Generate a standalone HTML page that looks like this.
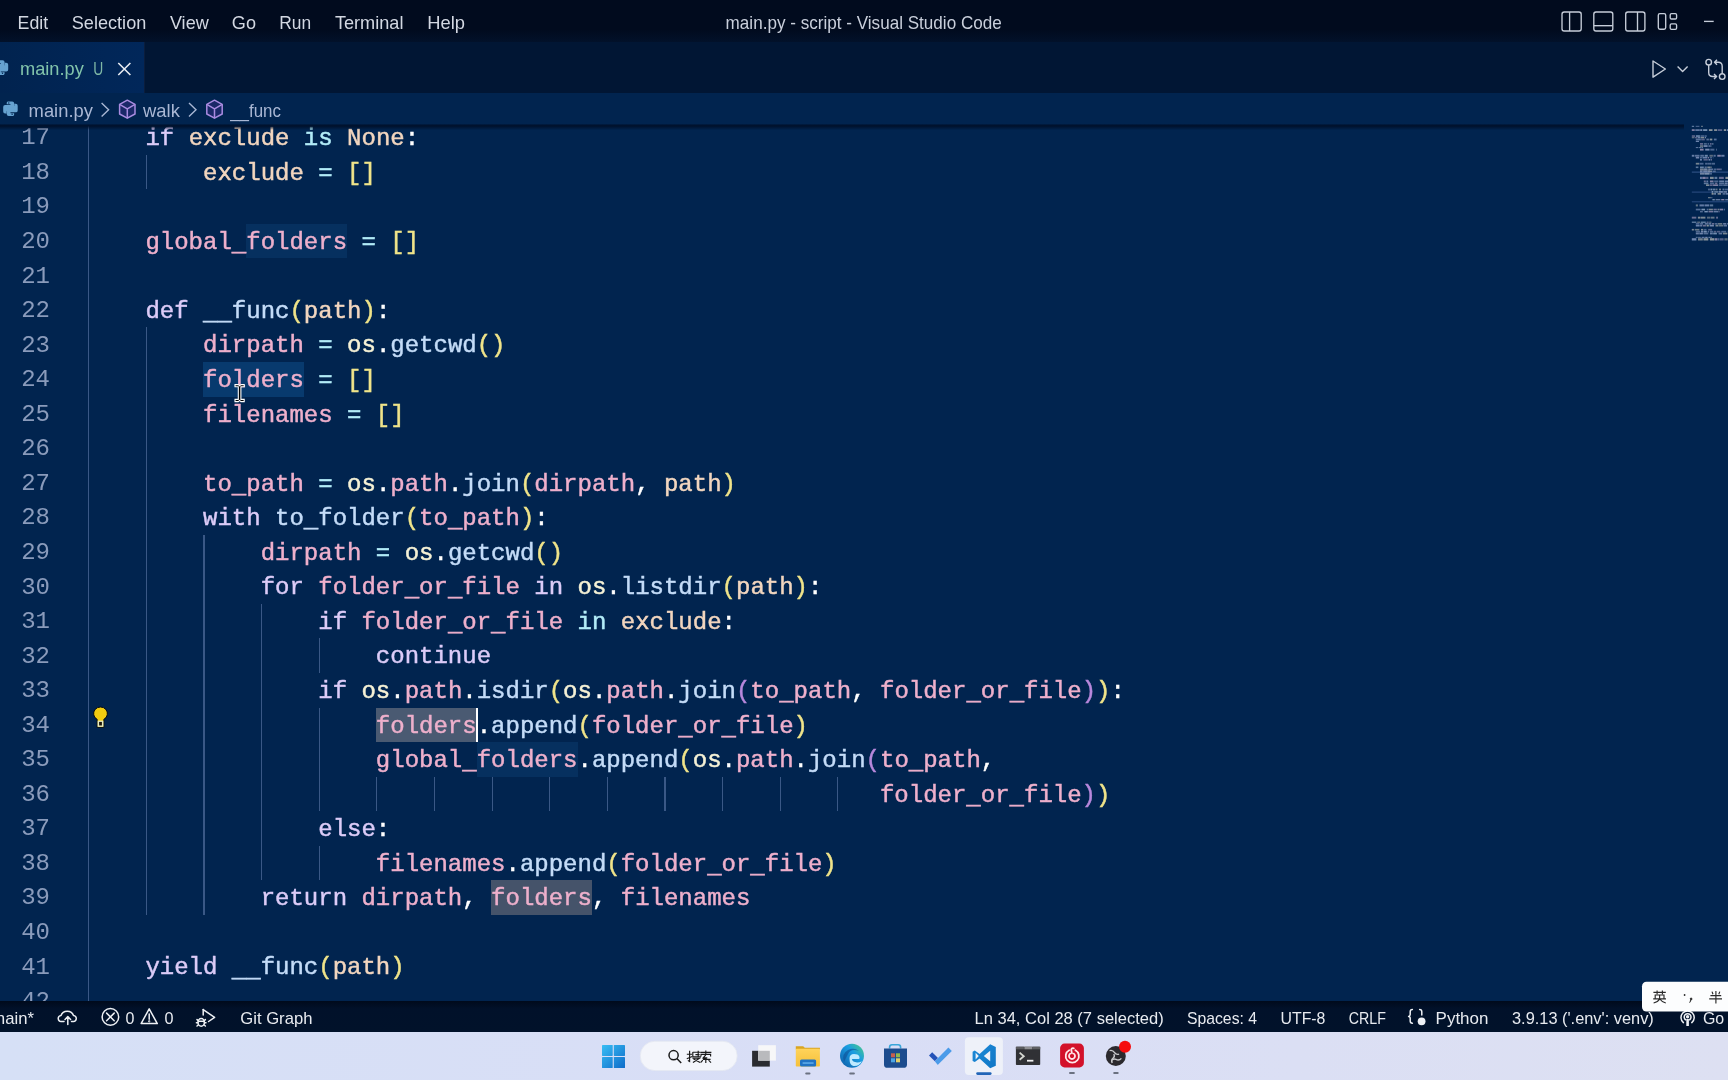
<!DOCTYPE html>
<html><head><meta charset="utf-8">
<style>
*{margin:0;padding:0;box-sizing:border-box}
html,body{width:1728px;height:1080px;overflow:hidden;background:#01244f}
body{position:relative;font-family:"Liberation Sans",sans-serif}
.abs{position:absolute}
#title{position:absolute;left:0;top:0;width:1728px;height:42px;background:linear-gradient(#010b1e 70%,#02112a)}
.mi{position:absolute;top:11px;font-size:18px;color:#d9dde6;white-space:nowrap}
#tabs{position:absolute;left:0;top:42px;width:1728px;height:51px;background:#011634}
#tab{position:absolute;left:0;top:0;width:145px;height:51px;background:linear-gradient(90deg,#01234f,#01275a);border-right:1px solid #0b1d3c}
#bc{position:absolute;left:0;top:93px;width:1728px;height:32px;background:#01244f}
.bct{position:absolute;top:4px;font-size:18px;color:#a9b8d6;white-space:nowrap}
#editor{position:absolute;left:0;top:125px;width:1728px;height:876px;background:#01244f;overflow:hidden}
#shadow{position:absolute;left:0;top:124px;width:1684px;height:6px;background:linear-gradient(rgba(0,16,42,0.3),#00102a 30%,rgba(0,20,50,0))}
.ln{position:absolute;left:0;width:50px;text-align:right;font-family:"Liberation Mono",monospace;font-size:24px;line-height:34.55px;height:34.55px;color:#8a9bbb;white-space:pre}
.cl{position:absolute;left:87.8px;font-family:"Liberation Mono",monospace;font-size:24px;line-height:34.55px;height:34.55px;color:#fff;white-space:pre}
.ig{position:absolute;width:1.2px;background:#3a5886}
.wh{position:absolute;height:34.55px;background:#083a6e}
.wh2{position:absolute;height:34.55px;background:#06305f}
.sel{position:absolute;height:34.55px;background:#4a5a72}
.sel2{position:absolute;height:34.55px;background:#45536a}
.cl i{font-style:normal;position:relative;top:2.2px}
.cl{-webkit-text-stroke:0.45px currentColor}
.cur{position:absolute;width:2px;height:34.55px;background:#fff}
#status{position:absolute;left:0;top:1001px;width:1728px;height:31px;background:linear-gradient(#000a1c,#01112a 25%,#01122a)}
.st{position:absolute;top:5px;font-size:17.5px;color:#e6e9ef;white-space:nowrap}
#taskbar{position:absolute;left:0;top:1032px;width:1728px;height:48px;background:linear-gradient(90deg,#d6e0f6,#d9def6 50%,#dde0f2)}
</style></head><body>
<div id="title"></div>
<div id="tabs">
  <div id="tab"></div>
</div>
<div id="bc"></div>
<div id="editor"></div>
<div style="position:absolute;left:0;top:0;width:1728px;height:1001px;overflow:hidden;will-change:transform"><div class="ln" style="top:121.35px">17</div>
<div class="ln" style="top:155.90px">18</div>
<div class="ln" style="top:190.45px">19</div>
<div class="ln" style="top:225.00px">20</div>
<div class="ln" style="top:259.55px">21</div>
<div class="ln" style="top:294.10px">22</div>
<div class="ln" style="top:328.65px">23</div>
<div class="ln" style="top:363.20px">24</div>
<div class="ln" style="top:397.75px">25</div>
<div class="ln" style="top:432.30px">26</div>
<div class="ln" style="top:466.85px">27</div>
<div class="ln" style="top:501.40px">28</div>
<div class="ln" style="top:535.95px">29</div>
<div class="ln" style="top:570.50px">30</div>
<div class="ln" style="top:605.05px">31</div>
<div class="ln" style="top:639.60px">32</div>
<div class="ln" style="top:674.15px">33</div>
<div class="ln" style="top:708.70px">34</div>
<div class="ln" style="top:743.25px">35</div>
<div class="ln" style="top:777.80px">36</div>
<div class="ln" style="top:812.35px">37</div>
<div class="ln" style="top:846.90px">38</div>
<div class="ln" style="top:881.45px">39</div>
<div class="ln" style="top:916.00px">40</div>
<div class="ln" style="top:950.55px">41</div>
<div class="ln" style="top:985.10px">42</div>
<div class="wh2" style="left:246.28px;top:223.80px;width:100.85px"></div>
<div class="wh" style="left:203.06px;top:362.00px;width:100.85px"></div>
<div class="wh2" style="left:476.79px;top:742.05px;width:100.85px"></div>
<div class="sel" style="left:375.94px;top:707.50px;width:100.85px"></div>
<div class="sel2" style="left:491.20px;top:880.25px;width:100.85px"></div>
<div class="ig" style="left:88.15px;top:126.00px;height:899.36px"></div>
<div class="ig" style="left:145.78px;top:154.70px;height:34.55px"></div>
<div class="ig" style="left:145.78px;top:327.45px;height:587.35px"></div>
<div class="ig" style="left:203.41px;top:534.75px;height:380.05px"></div>
<div class="ig" style="left:261.03px;top:603.85px;height:276.40px"></div>
<div class="ig" style="left:318.66px;top:638.40px;height:34.55px"></div>
<div class="ig" style="left:318.66px;top:707.50px;height:103.65px"></div>
<div class="ig" style="left:318.66px;top:845.70px;height:34.55px"></div>
<div class="ig" style="left:376.29px;top:776.60px;height:34.55px"></div>
<div class="ig" style="left:433.92px;top:776.60px;height:34.55px"></div>
<div class="ig" style="left:491.55px;top:776.60px;height:34.55px"></div>
<div class="ig" style="left:549.17px;top:776.60px;height:34.55px"></div>
<div class="ig" style="left:606.80px;top:776.60px;height:34.55px"></div>
<div class="ig" style="left:664.43px;top:776.60px;height:34.55px"></div>
<div class="ig" style="left:722.06px;top:776.60px;height:34.55px"></div>
<div class="ig" style="left:779.69px;top:776.60px;height:34.55px"></div>
<div class="ig" style="left:837.31px;top:776.60px;height:34.55px"></div>
<div class="cl" style="top:122.15px">    <span style="color:#dcccf8">if</span> <span style="color:#f2d6bf">exclude</span> <span style="color:#b2ecf8">is</span> <span style="color:#f2d6bf">None</span><span style="color:#ffffff">:</span></div>
<div class="cl" style="top:156.70px">        <span style="color:#f2d6bf">exclude</span> <span style="color:#b2ecf8">=</span> <span style="color:#f0e48a">[]</span></div>
<div class="cl" style="top:191.25px"></div>
<div class="cl" style="top:225.80px">    <span style="color:#eeb0cc">global<i>_</i>folders</span> <span style="color:#b2ecf8">=</span> <span style="color:#f0e48a">[]</span></div>
<div class="cl" style="top:260.35px"></div>
<div class="cl" style="top:294.90px">    <span style="color:#dcccf8">def</span> <span style="color:#c4dcf8"><i>_</i><i>_</i>func</span><span style="color:#f0e48a">(</span><span style="color:#f2d6bf">path</span><span style="color:#f0e48a">)</span><span style="color:#ffffff">:</span></div>
<div class="cl" style="top:329.45px">        <span style="color:#eeb0cc">dirpath</span> <span style="color:#b2ecf8">=</span> <span style="color:#f6f2d6">os</span><span style="color:#ffffff">.</span><span style="color:#c4dcf8">getcwd</span><span style="color:#f0e48a">()</span></div>
<div class="cl" style="top:364.00px">        <span style="color:#eeb0cc">folders</span> <span style="color:#b2ecf8">=</span> <span style="color:#f0e48a">[]</span></div>
<div class="cl" style="top:398.55px">        <span style="color:#eeb0cc">filenames</span> <span style="color:#b2ecf8">=</span> <span style="color:#f0e48a">[]</span></div>
<div class="cl" style="top:433.10px"></div>
<div class="cl" style="top:467.65px">        <span style="color:#eeb0cc">to<i>_</i>path</span> <span style="color:#b2ecf8">=</span> <span style="color:#f6f2d6">os</span><span style="color:#ffffff">.</span><span style="color:#eeb0cc">path</span><span style="color:#ffffff">.</span><span style="color:#c4dcf8">join</span><span style="color:#f0e48a">(</span><span style="color:#eeb0cc">dirpath</span><span style="color:#ffffff">, </span><span style="color:#f2d6bf">path</span><span style="color:#f0e48a">)</span></div>
<div class="cl" style="top:502.20px">        <span style="color:#dcccf8">with</span> <span style="color:#c4dcf8">to<i>_</i>folder</span><span style="color:#f0e48a">(</span><span style="color:#eeb0cc">to<i>_</i>path</span><span style="color:#f0e48a">)</span><span style="color:#ffffff">:</span></div>
<div class="cl" style="top:536.75px">            <span style="color:#eeb0cc">dirpath</span> <span style="color:#b2ecf8">=</span> <span style="color:#f6f2d6">os</span><span style="color:#ffffff">.</span><span style="color:#c4dcf8">getcwd</span><span style="color:#f0e48a">()</span></div>
<div class="cl" style="top:571.30px">            <span style="color:#dcccf8">for</span> <span style="color:#eeb0cc">folder<i>_</i>or<i>_</i>file</span> <span style="color:#dcccf8">in</span> <span style="color:#f6f2d6">os</span><span style="color:#ffffff">.</span><span style="color:#c4dcf8">listdir</span><span style="color:#f0e48a">(</span><span style="color:#f2d6bf">path</span><span style="color:#f0e48a">)</span><span style="color:#ffffff">:</span></div>
<div class="cl" style="top:605.85px">                <span style="color:#dcccf8">if</span> <span style="color:#eeb0cc">folder<i>_</i>or<i>_</i>file</span> <span style="color:#b2ecf8">in</span> <span style="color:#f2d6bf">exclude</span><span style="color:#ffffff">:</span></div>
<div class="cl" style="top:640.40px">                    <span style="color:#dcccf8">continue</span></div>
<div class="cl" style="top:674.95px">                <span style="color:#dcccf8">if</span> <span style="color:#f6f2d6">os</span><span style="color:#ffffff">.</span><span style="color:#eeb0cc">path</span><span style="color:#ffffff">.</span><span style="color:#c4dcf8">isdir</span><span style="color:#f0e48a">(</span><span style="color:#f6f2d6">os</span><span style="color:#ffffff">.</span><span style="color:#eeb0cc">path</span><span style="color:#ffffff">.</span><span style="color:#c4dcf8">join</span><span style="color:#b888dc">(</span><span style="color:#eeb0cc">to<i>_</i>path</span><span style="color:#ffffff">, </span><span style="color:#eeb0cc">folder<i>_</i>or<i>_</i>file</span><span style="color:#b888dc">)</span><span style="color:#f0e48a">)</span><span style="color:#ffffff">:</span></div>
<div class="cl" style="top:709.50px">                    <span style="color:#eeb0cc">folders</span><span style="color:#ffffff">.</span><span style="color:#c4dcf8">append</span><span style="color:#f0e48a">(</span><span style="color:#eeb0cc">folder<i>_</i>or<i>_</i>file</span><span style="color:#f0e48a">)</span></div>
<div class="cl" style="top:744.05px">                    <span style="color:#eeb0cc">global<i>_</i>folders</span><span style="color:#ffffff">.</span><span style="color:#c4dcf8">append</span><span style="color:#f0e48a">(</span><span style="color:#f6f2d6">os</span><span style="color:#ffffff">.</span><span style="color:#eeb0cc">path</span><span style="color:#ffffff">.</span><span style="color:#c4dcf8">join</span><span style="color:#b888dc">(</span><span style="color:#eeb0cc">to<i>_</i>path</span><span style="color:#ffffff">,</span></div>
<div class="cl" style="top:778.60px">                                                       <span style="color:#eeb0cc">folder<i>_</i>or<i>_</i>file</span><span style="color:#b888dc">)</span><span style="color:#f0e48a">)</span></div>
<div class="cl" style="top:813.15px">                <span style="color:#dcccf8">else</span><span style="color:#ffffff">:</span></div>
<div class="cl" style="top:847.70px">                    <span style="color:#eeb0cc">filenames</span><span style="color:#ffffff">.</span><span style="color:#c4dcf8">append</span><span style="color:#f0e48a">(</span><span style="color:#eeb0cc">folder<i>_</i>or<i>_</i>file</span><span style="color:#f0e48a">)</span></div>
<div class="cl" style="top:882.25px">            <span style="color:#dcccf8">return</span> <span style="color:#eeb0cc">dirpath</span><span style="color:#ffffff">, </span><span style="color:#eeb0cc">folders</span><span style="color:#ffffff">, </span><span style="color:#eeb0cc">filenames</span></div>
<div class="cl" style="top:916.80px"></div>
<div class="cl" style="top:951.35px">    <span style="color:#dcccf8">yield</span> <span style="color:#c4dcf8"><i>_</i><i>_</i>func</span><span style="color:#f0e48a">(</span><span style="color:#f2d6bf">path</span><span style="color:#f0e48a">)</span></div>
<div class="cur" style="left:476.29px;top:707.50px"></div></div>
<div id="shadow"></div>
<div id="status"></div>
<div id="taskbar"></div>
<svg id="ui" width="1728" height="1080" style="position:absolute;left:0;top:0;will-change:transform" font-family="'Liberation Sans', sans-serif">
<text x="17.60" y="28.90" font-size="19" fill="#d3d8e2" textLength="30.61" lengthAdjust="spacingAndGlyphs" >Edit</text>
<text x="71.80" y="28.90" font-size="19" fill="#d3d8e2" textLength="74.48" lengthAdjust="spacingAndGlyphs" >Selection</text>
<text x="169.90" y="28.90" font-size="19" fill="#d3d8e2" textLength="38.85" lengthAdjust="spacingAndGlyphs" >View</text>
<text x="231.80" y="28.90" font-size="19" fill="#d3d8e2" textLength="24.18" lengthAdjust="spacingAndGlyphs" >Go</text>
<text x="279.30" y="28.90" font-size="19" fill="#d3d8e2" textLength="31.89" lengthAdjust="spacingAndGlyphs" >Run</text>
<text x="334.90" y="28.90" font-size="19" fill="#d3d8e2" textLength="68.58" lengthAdjust="spacingAndGlyphs" >Terminal</text>
<text x="427.30" y="28.90" font-size="19" fill="#d3d8e2" textLength="37.69" lengthAdjust="spacingAndGlyphs" >Help</text>
<text x="725.60" y="28.90" font-size="18.5" fill="#c9cfdb" textLength="276.21" lengthAdjust="spacingAndGlyphs" >main.py - script - Visual Studio Code</text>
<text x="20.00" y="75.00" font-size="19" fill="#82c4ab" textLength="63.78" lengthAdjust="spacingAndGlyphs" >main.py</text>
<text x="93.30" y="75.00" font-size="19" fill="#7fb8a6" textLength="10.00" lengthAdjust="spacingAndGlyphs" >U</text>
<text x="28.60" y="116.60" font-size="19" fill="#a9b7d4" textLength="64.28" lengthAdjust="spacingAndGlyphs" >main.py</text>
<text x="143.05" y="116.60" font-size="19" fill="#a9b7d4" textLength="36.82" lengthAdjust="spacingAndGlyphs" >walk</text>
<text x="230.20" y="116.60" font-size="19" fill="#a9b7d4" textLength="50.80" lengthAdjust="spacingAndGlyphs" >__func</text>
<text x="-8.68" y="1023.70" font-size="17" fill="#e8ebf0" textLength="42.60" lengthAdjust="spacingAndGlyphs" >main*</text>
<text x="125.50" y="1023.70" font-size="17" fill="#e8ebf0" textLength="8.92" lengthAdjust="spacingAndGlyphs" >0</text>
<text x="164.40" y="1023.70" font-size="17" fill="#e8ebf0" textLength="9.02" lengthAdjust="spacingAndGlyphs" >0</text>
<text x="240.30" y="1023.70" font-size="17" fill="#e8ebf0" textLength="72.10" lengthAdjust="spacingAndGlyphs" >Git Graph</text>
<text x="974.50" y="1023.70" font-size="17" fill="#e8ebf0" textLength="189.19" lengthAdjust="spacingAndGlyphs" >Ln 34, Col 28 (7 selected)</text>
<text x="1187.00" y="1023.70" font-size="17" fill="#e8ebf0" textLength="70.00" lengthAdjust="spacingAndGlyphs" >Spaces: 4</text>
<text x="1280.50" y="1023.70" font-size="17" fill="#e8ebf0" textLength="44.91" lengthAdjust="spacingAndGlyphs" >UTF-8</text>
<text x="1348.80" y="1023.70" font-size="17" fill="#e8ebf0" textLength="37.18" lengthAdjust="spacingAndGlyphs" >CRLF</text>
<text x="1435.60" y="1023.70" font-size="17" fill="#e8ebf0" textLength="52.81" lengthAdjust="spacingAndGlyphs" >Python</text>
<text x="1512.00" y="1023.70" font-size="17" fill="#e8ebf0" textLength="141.79" lengthAdjust="spacingAndGlyphs" >3.9.13 (&#x27;.env&#x27;: venv)</text>
<text x="1702.90" y="1023.70" font-size="17" fill="#e8ebf0" textLength="21.28" lengthAdjust="spacingAndGlyphs" >Go</text>
<g fill="none" stroke="#c6cdd9" stroke-width="1.35">
<rect x="1562" y="12" width="19.2" height="19" rx="2.2"/><line x1="1569.6" y1="12" x2="1569.6" y2="31"/>
<rect x="1593.8" y="12" width="19" height="19" rx="2.2"/><line x1="1593.8" y1="25.7" x2="1612.8" y2="25.7"/>
<rect x="1625.7" y="12" width="19.2" height="19" rx="2.2"/><line x1="1637.5" y1="12" x2="1637.5" y2="31"/>
<rect x="1658.3" y="13.6" width="7.4" height="15.6" rx="1.6"/><rect x="1670.2" y="13.6" width="6.4" height="5.4" rx="1.3"/><rect x="1670.2" y="23.9" width="6.4" height="5.4" rx="1.3"/>
<line x1="1704" y1="21.4" x2="1713.7" y2="21.4"/>
</g>
<path d="M118.3 63 L130.4 75 M130.4 63 L118.3 75" stroke="#e8ecf2" stroke-width="1.6"/>
<g transform="translate(-7.2,59.6) scale(1.0)" fill="#66a2d0"><path d="M5.2 0.6h4.6a2 2 0 0 1 2 2v4.6a2 2 0 0 1-2 2H6.2a2.1 2.1 0 0 0-2.1 2.1v1.6H2.6a2 2 0 0 1-2-2V6.2a2 2 0 0 1 2-2h5.4v-0.8H4.2V2.6a2 2 0 0 1 1-2z"/><path d="M5.2 0.6h4.6a2 2 0 0 1 2 2v4.6a2 2 0 0 1-2 2H6.2a2.1 2.1 0 0 0-2.1 2.1v1.6H2.6a2 2 0 0 1-2-2V6.2a2 2 0 0 1 2-2h5.4v-0.8H4.2V2.6a2 2 0 0 1 1-2z" transform="rotate(180 8 8)"/><circle cx="6.3" cy="2.3" r="0.7" fill="#002451"/><circle cx="9.7" cy="13.7" r="0.7" fill="#002451"/></g>
<g fill="none" stroke="#c6cdd9" stroke-width="1.4" stroke-linejoin="round">
<path d="M1653 61 L1665.4 69 L1653 77.2 Z"/>
<path d="M1677.6 66.4 L1682.6 71.4 L1687.6 66.4"/>
<circle cx="1708.7" cy="62.2" r="2.8"/><path d="M1708.7 65 V72.5 Q1708.7 76.5 1712.7 76.5 H1716.5 M1714 74 L1716.6 76.5 L1714 79"/>
<circle cx="1722.2" cy="76.6" r="2.8"/><path d="M1722.2 73.8 V66.3 Q1722.2 62.3 1718.2 62.3 H1714.6 M1717 59.8 L1714.5 62.3 L1717 64.8"/>
</g>
<g transform="translate(2.6,100.8) scale(0.98)" fill="#66a2d0"><path d="M5.2 0.6h4.6a2 2 0 0 1 2 2v4.6a2 2 0 0 1-2 2H6.2a2.1 2.1 0 0 0-2.1 2.1v1.6H2.6a2 2 0 0 1-2-2V6.2a2 2 0 0 1 2-2h5.4v-0.8H4.2V2.6a2 2 0 0 1 1-2z"/><path d="M5.2 0.6h4.6a2 2 0 0 1 2 2v4.6a2 2 0 0 1-2 2H6.2a2.1 2.1 0 0 0-2.1 2.1v1.6H2.6a2 2 0 0 1-2-2V6.2a2 2 0 0 1 2-2h5.4v-0.8H4.2V2.6a2 2 0 0 1 1-2z" transform="rotate(180 8 8)"/><circle cx="6.3" cy="2.3" r="0.7" fill="#002451"/><circle cx="9.7" cy="13.7" r="0.7" fill="#002451"/></g>
<path d="M101.6 103 l7 6.8 l-7 6.8" fill="none" stroke="#a9b7d4" stroke-width="1.4"/>
<g transform="translate(118.8,99.4)" fill="none" stroke="#a98be0" stroke-width="1.5" stroke-linejoin="round"><path d="M8.5 0.8 L16.2 5 V14.6 L8.5 18.8 L0.8 14.6 V5 Z" fill="#1a2868"/><path d="M0.8 5 L8.5 9.4 L16.2 5 M8.5 9.4 V18.8"/></g>
<path d="M189 103 l7 6.8 l-7 6.8" fill="none" stroke="#a9b7d4" stroke-width="1.4"/>
<g transform="translate(206,99.4)" fill="none" stroke="#a98be0" stroke-width="1.5" stroke-linejoin="round"><path d="M8.5 0.8 L16.2 5 V14.6 L8.5 18.8 L0.8 14.6 V5 Z" fill="#1a2868"/><path d="M0.8 5 L8.5 9.4 L16.2 5 M8.5 9.4 V18.8"/></g>
<g><path d="M97.2 719.4 a6.9 6.6 0 1 1 6.6 0 v7.9 h-6.6z" fill="#f2cc10" stroke="#050a10" stroke-width="1"/><rect x="97.6" y="720.6" width="5.8" height="6.2" fill="#e6ecc4"/><rect x="99.1" y="721.9" width="2.8" height="3.6" fill="#1a1408"/></g>
<path d="M235 384.6 h3.3 l1.3 1.2 l1.3 -1.2 h3.3 v2.2 h-3.3 v12.6 h3.3 v2.2 h-3.3 l-1.3 -1.2 l-1.3 1.2 h-3.3 v-2.2 h3.3 v-12.6 h-3.3z" fill="#000" stroke="#fff" stroke-width="1.1"/>
<g fill="none" stroke="#eef1f5" stroke-width="1.5" stroke-linejoin="round" stroke-linecap="round">
<path d="M64 1021.5 H61.5 a3 3 0 0 1 -0.5 -6 a6.5 6 0 0 1 12.5 0 a3 3 0 0 1 -0.5 6 H71.5"/><path d="M67.8 1024.5 V1016.8 M65 1019.5 L67.8 1016.6 L70.6 1019.5"/>
<circle cx="110.4" cy="1016.9" r="8.3"/><path d="M106.6 1013.1 L114.2 1020.7 M114.2 1013.1 L106.6 1020.7"/>
<path d="M149.2 1008.9 L157.3 1023.6 H141.1 Z"/><path d="M149.2 1014 V1019.2"/><circle cx="149.2" cy="1021.3" r="0.4"/>
<path d="M203.2 1009.6 L214.6 1017.3 L208.6 1021.5"/><path d="M203.2 1009.6 V1015"/>
<ellipse cx="201.2" cy="1022.4" rx="3.2" ry="3.8"/><path d="M197 1019.6 l1.2 1 M205.4 1019.6 l-1.2 1 M196.4 1022.8 h1.6 M206 1022.8 h-1.6 M197 1026 l1.2 -1 M205.4 1026 l-1.2 -1 M198.2 1021.2 h6"/>
<path d="M1412.4 1009.6 q-2.2 0 -2.2 2.2 v2.8 q0 1.6 -1.6 1.8 q1.6 0.2 1.6 1.8 v2.8 q0 2.2 2.2 2.2"/><path d="M1419.6 1009.6 q2.2 0 2.2 2.2 v3.2"/>
</g>
<circle cx="1421.6" cy="1021.3" r="3.9" fill="#eef1f5"/>
<g fill="none" stroke="#eef1f5" stroke-width="1.5" stroke-linecap="round"><path d="M1683.4 1022.6 a6.6 6.6 0 1 1 8.4 0"/><path d="M1685.6 1019.8 a3.4 3.4 0 1 1 4 0"/></g>
<circle cx="1687.6" cy="1016.8" r="1.7" fill="#eef1f5"/><rect x="1686.3" y="1019" width="2.6" height="7" fill="#eef1f5"/>
<defs><linearGradient id="win" gradientUnits="userSpaceOnUse" x1="602" y1="1045" x2="625" y2="1068"><stop offset="0" stop-color="#38bdf4"/><stop offset="1" stop-color="#0f6cc9"/></linearGradient><linearGradient id="edge1" x1="0" y1="1" x2="1" y2="0"><stop offset="0" stop-color="#0c59a4"/><stop offset="0.6" stop-color="#1b9de2"/><stop offset="1" stop-color="#4fd17a"/></linearGradient><linearGradient id="folder" x1="0" y1="0" x2="0" y2="1"><stop offset="0" stop-color="#ffd35a"/><stop offset="1" stop-color="#f5c03a"/></linearGradient><linearGradient id="vsc" x1="0" y1="0" x2="1" y2="1"><stop offset="0" stop-color="#1c8ad8"/><stop offset="1" stop-color="#1177c5"/></linearGradient></defs>
<g fill="url(#win)"><rect x="602" y="1045" width="10.7" height="10.9" rx="0.6"/><rect x="613.8" y="1045" width="11.2" height="10.9" rx="0.6"/><rect x="602" y="1057" width="10.7" height="11" rx="0.6"/><rect x="613.8" y="1057" width="11.2" height="11" rx="0.6"/></g>
<rect x="640.2" y="1041.2" width="97" height="29.4" rx="14.7" fill="#f3f5fb" stroke="#e3e7f0" stroke-width="0.8"/>
<g fill="none" stroke="#1b1b1b" stroke-width="1.5"><circle cx="673.6" cy="1055.2" r="4.6"/><path d="M676.9 1058.6 L681.2 1063"/></g>
<g fill="none" stroke="#1b1b1b" stroke-width="1.15" stroke-linecap="square"><path d="M687.4 1054.2 h4.2 M689.6 1051.2 v10.3 l-1.2 -0.8 M687.3 1058.6 l4.4 -1.8"/><path d="M693.3 1052.2 h4.2 M698.2 1051.2 v5.8 M692.8 1052.5 v4.4 h7.6 M699.4 1052.2 h-1 M696 1054.6 h3"/><path d="M693 1058.2 h6.4 l-6 4 M694 1059.3 l5.6 3"/><path d="M700.8 1052.4 h10 M705.8 1051 v3.2 M701 1056 v-1.6 h9.6 v1.6 M705.4 1055.4 l-2.2 2.4 h4 l-4.2 1.6 h7 M705.8 1059.4 v3 M702.4 1060.6 l-1.4 1.6 M709 1060.6 l1.6 1.6"/></g>
<rect x="752.1" y="1050.8" width="17.7" height="15.8" fill="#2a2b30"/>
<rect x="758.2" y="1045.2" width="17.7" height="15.4" fill="#f7f7f8"/>
<rect x="758.2" y="1050.8" width="11.6" height="9.8" fill="#b9babd"/>
<path d="M795.8 1046.2 h7.4 l1.6 1.6 h15.1 v1.8 h-24.1z" fill="#d9a521"/>
<rect x="795.8" y="1048.8" width="24.1" height="17.8" rx="0.8" fill="url(#folder)"/>
<rect x="800" y="1059.5" width="16.1" height="7.1" rx="1.5" fill="#1f72c4"/><rect x="802.6" y="1062.4" width="11" height="1.3" fill="#6ab6f0"/>
<rect x="805.2" y="1072.6" width="5.3" height="2" rx="1" fill="#6b7180"/>
<circle cx="852" cy="1055.7" r="12" fill="url(#edge1)"/>
<path d="M849.5 1058.5 q0 -4.5 4.5 -4.5 q4 0 5.3 2.4 q1 2.2 -0.6 2.6 h-6.8 q0.6 3.2 5.2 3.4 q2.6 0 4.6 -1.2 q-2 5.2 -8.2 4.8 q-4 -0.6 -4 -7.5z" fill="#bfeaff"/>
<path d="M844 1062 q-3 -8 4 -12 q6 -3 11 1 q-8 -3 -11 3 q-2 4 -4 8z" fill="#0d4f94" opacity="0.6"/>
<rect x="849.2" y="1072.6" width="5.7" height="2" rx="1" fill="#6b7180"/>
<path d="M889.6 1048.6 v-1.4 a2.4 2.4 0 0 1 2.4 -2.4 h6.2 a2.4 2.4 0 0 1 2.4 2.4 v1.4" fill="none" stroke="#3aa6d9" stroke-width="1.6"/>
<path d="M884 1048.6 h23 v15.8 a3.4 3.4 0 0 1 -3.4 3.4 h-16.2 a3.4 3.4 0 0 1 -3.4 -3.4z" fill="#1c4c8e"/>
<rect x="891" y="1053.3" width="4" height="4" fill="#c7604e"/><rect x="896" y="1053.3" width="4" height="4" fill="#93b84c"/><rect x="891" y="1058.3" width="4" height="4" fill="#4ca5e3"/><rect x="896" y="1058.3" width="4" height="4" fill="#e2cf6a"/>
<path d="M929 1055.4 l3.2 -3.2 l5.8 5.8 l-3.2 3.2z" fill="#2452b8"/>
<path d="M934.8 1061.2 l13.6 -13.6 l3.4 3.4 l-13.6 13.6 q-0.4 0.4 -0.8 0z" fill="#4b9be9"/>
<rect x="964.9" y="1037.3" width="38" height="37.6" rx="4" fill="#eef1f9"/>
<path d="M990.2 1044.3 l5.6 2.6 v18.8 l-5.6 2.6 l-10.6 -9.8 l-4.8 3.6 l-2.2 -1.2 v-9.2 l2.2 -1.2 l4.8 3.6z M990.2 1050.8 l-6.4 5.2 l6.4 5.2z M975.6 1052.8 v6.6 l3.2 -3.3z" fill="url(#vsc)" fill-rule="evenodd"/>
<rect x="976.2" y="1072.2" width="15.4" height="2.7" rx="1.3" fill="#2265b8"/>
<rect x="1015.9" y="1046.7" width="24.3" height="18.3" rx="0.8" fill="#303135"/>
<rect x="1015.9" y="1046.7" width="8" height="2.6" fill="#5a5b5f"/><rect x="1024.4" y="1046.7" width="8" height="2.6" fill="#8e8f93"/><rect x="1032.6" y="1046.7" width="7.6" height="2.6" fill="#5f6064"/>
<path d="M1019.6 1052.6 l4.2 3.6 l-4.2 3.6" fill="none" stroke="#d4d6d0" stroke-width="1.8"/><rect x="1027" y="1059.8" width="6.4" height="1.8" fill="#eeeeee"/>
<rect x="1060.1" y="1043.6" width="23.8" height="23.8" rx="4.5" fill="#d3112a"/>
<g fill="none" stroke="#ffe8ea" stroke-width="1.8" stroke-linecap="round"><path d="M1069.2 1050.2 a6.6 6.6 0 1 0 6.2 0"/><path d="M1073.8 1048.4 q-2 -0.8 -2.6 1.4 l0.8 3.6"/><path d="M1070.2 1053.6 a3 3 0 1 0 3.6 0"/></g>
<rect x="1069" y="1072" width="5.9" height="2" rx="1" fill="#6b7180"/>
<circle cx="1115.8" cy="1056" r="10" fill="#2b292d"/>
<g fill="none" stroke="#c9c9cb" stroke-width="1.4"><path d="M1109.6 1050.6 q3 -1 5 2 q1.5 2.5 4.5 1.5"/><path d="M1112.2 1063 q-1.5 -3 1 -5 q2 -1.6 0.6 -4"/><path d="M1121.4 1058.4 q-2.4 2.6 -5.4 1 q-2.4 -1.2 -4 0.8"/></g>
<circle cx="1125" cy="1046.8" r="6" fill="#f50d0d"/>
<rect x="1113.2" y="1072" width="5.5" height="2" rx="1" fill="#6b7180"/>
<rect x="1642" y="981.8" width="100" height="29.8" rx="4.5" fill="#fcfdfe"/>
<g fill="none" stroke="#2a2a2a" stroke-width="1.15" stroke-linecap="butt"><path d="M1653.4 992.4 h12.4 M1657.1 990.4 v4 M1662.4 990.4 v4"/><path d="M1655.2 999 v-4 h8.8 v4 M1653.2 998.8 h12.8 M1659.6 995 v4 M1659.6 999 q-1.6 3 -6 4 M1659.8 999 q2 3 6 4"/><path d="M1710.4 995.6 h10.8 M1709.2 998.9 h12.8 M1715.9 991 v12.5 M1712 991.6 l1 2.6 M1719.8 991.6 l-1 2.6"/></g>
<circle cx="1684.6" cy="995" r="0.9" fill="#2a2a2a"/><path d="M1690.2 999 a0.9 0.9 0 1 1 0.6 0.8 q-0.1 1.8 -1.2 2.9" fill="#2a2a2a" stroke="#2a2a2a" stroke-width="0.9"/>
<g>
<rect x="1691.8" y="125.8" width="2.3" height="1.1" fill="#c0d4f0" opacity="0.54"/>
<rect x="1695.7" y="125.8" width="3.7" height="1.1" fill="#b8c4e8" opacity="0.42"/>
<rect x="1701.0" y="125.8" width="2.0" height="1.1" fill="#d8d4c8" opacity="0.46"/>
<rect x="1691.8" y="129.2" width="2.9" height="1.8" fill="#d0b8d8" opacity="0.62"/>
<rect x="1695.3" y="129.2" width="4.5" height="1.8" fill="#b8c4e8" opacity="0.53"/>
<rect x="1700.2" y="129.2" width="2.1" height="1.8" fill="#b8c4e8" opacity="0.64"/>
<rect x="1703.1" y="129.2" width="4.2" height="1.8" fill="#c0d4f0" opacity="0.61"/>
<rect x="1708.9" y="129.2" width="3.6" height="1.8" fill="#d8d4c8" opacity="0.63"/>
<rect x="1714.1" y="129.2" width="2.9" height="1.8" fill="#d8d4c8" opacity="0.60"/>
<rect x="1717.6" y="129.2" width="4.6" height="1.8" fill="#d0b8d8" opacity="0.42"/>
<rect x="1723.8" y="129.2" width="2.3" height="1.8" fill="#d8d4c8" opacity="0.64"/>
<rect x="1726.8" y="129.2" width="1.2" height="1.8" fill="#a8b8e0" opacity="0.61"/>
<rect x="1691.8" y="135.3" width="3.4" height="1.5" fill="#d0b8d8" opacity="0.50"/>
<rect x="1696.0" y="135.3" width="3.9" height="1.5" fill="#c0d4f0" opacity="0.63"/>
<rect x="1700.5" y="135.3" width="3.9" height="1.5" fill="#a8b8e0" opacity="0.48"/>
<rect x="1704.8" y="135.3" width="2.0" height="1.5" fill="#a8b8e0" opacity="0.45"/>
<rect x="1691.8" y="137.0" width="2.5" height="1.3" fill="#d8d4c8" opacity="0.42"/>
<rect x="1694.7" y="137.0" width="2.7" height="1.3" fill="#d0b8d8" opacity="0.42"/>
<rect x="1697.8" y="137.0" width="2.5" height="1.3" fill="#b8c4e8" opacity="0.59"/>
<rect x="1700.7" y="137.0" width="3.6" height="1.3" fill="#d8d4c8" opacity="0.59"/>
<rect x="1705.1" y="137.0" width="0.9" height="1.3" fill="#c0d4f0" opacity="0.63"/>
<rect x="1695.8" y="138.6" width="5.0" height="1.8" fill="#b8c4e8" opacity="0.48"/>
<rect x="1701.2" y="138.6" width="3.6" height="1.8" fill="#d0b8d8" opacity="0.41"/>
<rect x="1706.4" y="138.6" width="2.5" height="1.8" fill="#b8c4e8" opacity="0.47"/>
<rect x="1709.7" y="138.6" width="2.6" height="1.8" fill="#d8d4c8" opacity="0.64"/>
<rect x="1713.9" y="138.6" width="2.7" height="1.8" fill="#a8b8e0" opacity="0.53"/>
<rect x="1695.8" y="140.8" width="3.2" height="1.2" fill="#a8b8e0" opacity="0.64"/>
<rect x="1700.0" y="143.2" width="3.0" height="1.4" fill="#d0b8d8" opacity="0.58"/>
<rect x="1703.8" y="143.2" width="3.0" height="1.4" fill="#c0d4f0" opacity="0.46"/>
<rect x="1707.6" y="143.2" width="1.5" height="1.4" fill="#a8b8e0" opacity="0.50"/>
<rect x="1710.0" y="143.2" width="1.6" height="1.4" fill="#d0b8d8" opacity="0.55"/>
<rect x="1712.0" y="143.2" width="1.5" height="1.4" fill="#c0d4f0" opacity="0.48"/>
<rect x="1700.0" y="145.2" width="3.6" height="1.7" fill="#d8d4c8" opacity="0.47"/>
<rect x="1704.0" y="145.2" width="3.6" height="1.7" fill="#b8c4e8" opacity="0.64"/>
<rect x="1708.4" y="145.2" width="2.4" height="1.7" fill="#a8b8e0" opacity="0.51"/>
<rect x="1711.6" y="145.2" width="0.4" height="1.7" fill="#c0d4f0" opacity="0.45"/>
<rect x="1695.8" y="147.0" width="2.6" height="1.1" fill="#b8c4e8" opacity="0.49"/>
<rect x="1699.0" y="147.0" width="2.6" height="1.1" fill="#c0d4f0" opacity="0.46"/>
<rect x="1702.1" y="147.0" width="0.9" height="1.1" fill="#b8c4e8" opacity="0.57"/>
<rect x="1700.0" y="148.7" width="3.6" height="1.9" fill="#d0b8d8" opacity="0.64"/>
<rect x="1705.2" y="148.7" width="4.3" height="1.9" fill="#b8c4e8" opacity="0.64"/>
<rect x="1710.3" y="148.7" width="4.1" height="1.9" fill="#a8b8e0" opacity="0.45"/>
<rect x="1716.0" y="148.7" width="0.6" height="1.9" fill="#b8c4e8" opacity="0.60"/>
<rect x="1691.8" y="154.8" width="2.6" height="1.9" fill="#a8b8e0" opacity="0.61"/>
<rect x="1695.0" y="154.8" width="4.5" height="1.9" fill="#b8c4e8" opacity="0.49"/>
<rect x="1700.3" y="154.8" width="3.6" height="1.9" fill="#a8b8e0" opacity="0.51"/>
<rect x="1704.7" y="154.8" width="3.1" height="1.9" fill="#c0d4f0" opacity="0.56"/>
<rect x="1709.4" y="154.8" width="3.5" height="1.9" fill="#d8d4c8" opacity="0.41"/>
<rect x="1713.5" y="154.8" width="2.2" height="1.9" fill="#a8b8e0" opacity="0.52"/>
<rect x="1717.3" y="154.8" width="3.5" height="1.9" fill="#d0b8d8" opacity="0.65"/>
<rect x="1721.2" y="154.8" width="3.3" height="1.9" fill="#a8b8e0" opacity="0.61"/>
<rect x="1695.8" y="156.9" width="3.4" height="1.6" fill="#b8c4e8" opacity="0.62"/>
<rect x="1700.0" y="156.9" width="1.9" height="1.6" fill="#b8c4e8" opacity="0.46"/>
<rect x="1702.5" y="156.9" width="4.6" height="1.6" fill="#a8b8e0" opacity="0.62"/>
<rect x="1707.6" y="156.9" width="1.5" height="1.6" fill="#d0b8d8" opacity="0.59"/>
<rect x="1709.9" y="156.9" width="2.3" height="1.6" fill="#a8b8e0" opacity="0.40"/>
<rect x="1713.8" y="156.9" width="0.2" height="1.6" fill="#b8c4e8" opacity="0.63"/>
<rect x="1700.0" y="159.0" width="1.9" height="1.6" fill="#a8b8e0" opacity="0.64"/>
<rect x="1703.5" y="159.0" width="4.3" height="1.6" fill="#d0b8d8" opacity="0.42"/>
<rect x="1708.5" y="159.0" width="1.9" height="1.6" fill="#b8c4e8" opacity="0.62"/>
<rect x="1711.0" y="159.0" width="1.0" height="1.6" fill="#d0b8d8" opacity="0.47"/>
<rect x="1695.8" y="162.8" width="3.2" height="1.8" fill="#d8d4c8" opacity="0.54"/>
<rect x="1699.4" y="162.8" width="4.1" height="1.8" fill="#a8b8e0" opacity="0.46"/>
<rect x="1705.2" y="162.8" width="1.7" height="1.8" fill="#b8c4e8" opacity="0.48"/>
<rect x="1707.2" y="162.8" width="4.2" height="1.8" fill="#b8c4e8" opacity="0.41"/>
<rect x="1711.8" y="162.8" width="3.2" height="1.8" fill="#b8c4e8" opacity="0.41"/>
<rect x="1695.8" y="166.5" width="2.6" height="1.6" fill="#c0d4f0" opacity="0.48"/>
<rect x="1700.0" y="166.5" width="3.8" height="1.6" fill="#c0d4f0" opacity="0.55"/>
<rect x="1704.6" y="166.5" width="2.2" height="1.6" fill="#b8c4e8" opacity="0.48"/>
<rect x="1707.3" y="166.5" width="3.4" height="1.6" fill="#d8d4c8" opacity="0.58"/>
<rect x="1711.2" y="166.5" width="0.8" height="1.6" fill="#d8d4c8" opacity="0.41"/>
<rect x="1700.0" y="168.5" width="3.7" height="1.7" fill="#d8d4c8" opacity="0.41"/>
<rect x="1704.1" y="168.5" width="2.8" height="1.7" fill="#c0d4f0" opacity="0.52"/>
<rect x="1708.5" y="168.5" width="4.8" height="1.7" fill="#b8c4e8" opacity="0.50"/>
<rect x="1714.0" y="168.5" width="2.3" height="1.7" fill="#a8b8e0" opacity="0.47"/>
<rect x="1716.6" y="168.5" width="4.3" height="1.7" fill="#d0b8d8" opacity="0.46"/>
<rect x="1721.3" y="168.5" width="0.7" height="1.7" fill="#a8b8e0" opacity="0.49"/>
<rect x="1700.0" y="170.6" width="1.9" height="1.6" fill="#a8b8e0" opacity="0.57"/>
<rect x="1703.5" y="170.6" width="3.8" height="1.6" fill="#a8b8e0" opacity="0.58"/>
<rect x="1707.8" y="170.6" width="4.3" height="1.6" fill="#d8d4c8" opacity="0.58"/>
<rect x="1712.7" y="170.6" width="2.3" height="1.6" fill="#a8b8e0" opacity="0.50"/>
<rect x="1715.4" y="170.6" width="0.6" height="1.6" fill="#d8d4c8" opacity="0.56"/>
<rect x="1700.0" y="172.8" width="4.4" height="1.8" fill="#b8c4e8" opacity="0.49"/>
<rect x="1704.8" y="172.8" width="4.5" height="1.8" fill="#c0d4f0" opacity="0.57"/>
<rect x="1710.0" y="172.8" width="2.0" height="1.8" fill="#a8b8e0" opacity="0.41"/>
<rect x="1700.0" y="176.8" width="1.9" height="2.2" fill="#a8b8e0" opacity="0.59"/>
<rect x="1702.3" y="176.8" width="3.4" height="2.2" fill="#d0b8d8" opacity="0.62"/>
<rect x="1706.1" y="176.8" width="2.3" height="2.2" fill="#d0b8d8" opacity="0.44"/>
<rect x="1710.0" y="176.8" width="3.7" height="2.2" fill="#d8d4c8" opacity="0.59"/>
<rect x="1714.5" y="176.8" width="2.8" height="2.2" fill="#c0d4f0" opacity="0.50"/>
<rect x="1718.9" y="176.8" width="4.9" height="2.2" fill="#d0b8d8" opacity="0.49"/>
<rect x="1725.4" y="176.8" width="2.6" height="2.2" fill="#d8d4c8" opacity="0.64"/>
<rect x="1703.8" y="180.5" width="2.0" height="1.7" fill="#d0b8d8" opacity="0.50"/>
<rect x="1706.4" y="180.5" width="1.8" height="1.7" fill="#a8b8e0" opacity="0.59"/>
<rect x="1709.9" y="180.5" width="3.6" height="1.7" fill="#d0b8d8" opacity="0.61"/>
<rect x="1714.2" y="180.5" width="4.1" height="1.7" fill="#a8b8e0" opacity="0.44"/>
<rect x="1719.2" y="180.5" width="4.8" height="1.7" fill="#a8b8e0" opacity="0.61"/>
<rect x="1724.7" y="180.5" width="3.3" height="1.7" fill="#a8b8e0" opacity="0.61"/>
<rect x="1703.8" y="182.6" width="4.6" height="1.6" fill="#c0d4f0" opacity="0.48"/>
<rect x="1710.0" y="182.6" width="4.3" height="1.6" fill="#a8b8e0" opacity="0.45"/>
<rect x="1715.1" y="182.6" width="2.3" height="1.6" fill="#d0b8d8" opacity="0.52"/>
<rect x="1719.1" y="182.6" width="5.0" height="1.6" fill="#a8b8e0" opacity="0.52"/>
<rect x="1724.6" y="182.6" width="3.1" height="1.6" fill="#a8b8e0" opacity="0.61"/>
<rect x="1706.0" y="184.4" width="3.2" height="1.6" fill="#d8d4c8" opacity="0.58"/>
<rect x="1709.6" y="184.4" width="3.1" height="1.6" fill="#d0b8d8" opacity="0.46"/>
<rect x="1713.1" y="184.4" width="4.9" height="1.6" fill="#d0b8d8" opacity="0.61"/>
<rect x="1718.6" y="184.4" width="4.2" height="1.6" fill="#a8b8e0" opacity="0.43"/>
<rect x="1723.2" y="184.4" width="4.6" height="1.6" fill="#b8c4e8" opacity="0.46"/>
<rect x="1708.0" y="188.6" width="2.1" height="1.8" fill="#b8c4e8" opacity="0.42"/>
<rect x="1710.5" y="188.6" width="1.8" height="1.8" fill="#c0d4f0" opacity="0.61"/>
<rect x="1712.8" y="188.6" width="2.7" height="1.8" fill="#c0d4f0" opacity="0.55"/>
<rect x="1715.9" y="188.6" width="1.6" height="1.8" fill="#d8d4c8" opacity="0.48"/>
<rect x="1719.1" y="188.6" width="1.8" height="1.8" fill="#d8d4c8" opacity="0.56"/>
<rect x="1722.5" y="188.6" width="1.9" height="1.8" fill="#c0d4f0" opacity="0.48"/>
<rect x="1724.8" y="188.6" width="3.2" height="1.8" fill="#a8b8e0" opacity="0.43"/>
<rect x="1711.6" y="191.0" width="1.8" height="1.8" fill="#c0d4f0" opacity="0.64"/>
<rect x="1714.2" y="191.0" width="4.2" height="1.8" fill="#c0d4f0" opacity="0.47"/>
<rect x="1718.8" y="191.0" width="4.1" height="1.8" fill="#a8b8e0" opacity="0.64"/>
<rect x="1723.3" y="191.0" width="3.8" height="1.8" fill="#b8c4e8" opacity="0.53"/>
<rect x="1728.0" y="191.0" width="0.0" height="1.8" fill="#d0b8d8" opacity="0.54"/>
<rect x="1711.6" y="193.0" width="2.1" height="1.7" fill="#d8d4c8" opacity="0.62"/>
<rect x="1714.1" y="193.0" width="1.9" height="1.7" fill="#c0d4f0" opacity="0.54"/>
<rect x="1717.6" y="193.0" width="3.4" height="1.7" fill="#d8d4c8" opacity="0.56"/>
<rect x="1722.6" y="193.0" width="2.6" height="1.7" fill="#b8c4e8" opacity="0.44"/>
<rect x="1725.6" y="193.0" width="2.4" height="1.7" fill="#a8b8e0" opacity="0.59"/>
<rect x="1708.0" y="197.0" width="2.8" height="1.3" fill="#d8d4c8" opacity="0.47"/>
<rect x="1711.2" y="197.0" width="1.2" height="1.3" fill="#a8b8e0" opacity="0.41"/>
<rect x="1712.4" y="199.0" width="2.4" height="1.4" fill="#c0d4f0" opacity="0.59"/>
<rect x="1715.6" y="199.0" width="4.8" height="1.4" fill="#b8c4e8" opacity="0.51"/>
<rect x="1721.2" y="199.0" width="3.2" height="1.4" fill="#d0b8d8" opacity="0.65"/>
<rect x="1725.2" y="199.0" width="2.8" height="1.4" fill="#a8b8e0" opacity="0.57"/>
<rect x="1695.8" y="204.4" width="2.1" height="2.0" fill="#d8d4c8" opacity="0.45"/>
<rect x="1699.5" y="204.4" width="4.4" height="2.0" fill="#a8b8e0" opacity="0.59"/>
<rect x="1704.5" y="204.4" width="4.5" height="2.0" fill="#a8b8e0" opacity="0.60"/>
<rect x="1709.6" y="204.4" width="3.5" height="2.0" fill="#c0d4f0" opacity="0.45"/>
<rect x="1713.9" y="204.4" width="0.1" height="2.0" fill="#d8d4c8" opacity="0.41"/>
<rect x="1695.8" y="208.7" width="4.8" height="1.7" fill="#a8b8e0" opacity="0.50"/>
<rect x="1701.4" y="208.7" width="3.7" height="1.7" fill="#c0d4f0" opacity="0.64"/>
<rect x="1706.7" y="208.7" width="1.6" height="1.7" fill="#b8c4e8" opacity="0.45"/>
<rect x="1708.7" y="208.7" width="4.2" height="1.7" fill="#d8d4c8" opacity="0.57"/>
<rect x="1713.5" y="208.7" width="3.3" height="1.7" fill="#d0b8d8" opacity="0.52"/>
<rect x="1717.5" y="208.7" width="1.6" height="1.7" fill="#d8d4c8" opacity="0.53"/>
<rect x="1719.5" y="208.7" width="3.5" height="1.7" fill="#d0b8d8" opacity="0.64"/>
<rect x="1723.6" y="208.7" width="1.4" height="1.7" fill="#b8c4e8" opacity="0.42"/>
<rect x="1700.0" y="211.0" width="2.8" height="1.4" fill="#b8c4e8" opacity="0.46"/>
<rect x="1704.4" y="211.0" width="3.4" height="1.4" fill="#c0d4f0" opacity="0.63"/>
<rect x="1708.5" y="211.0" width="4.5" height="1.4" fill="#d0b8d8" opacity="0.57"/>
<rect x="1713.5" y="211.0" width="4.5" height="1.4" fill="#b8c4e8" opacity="0.55"/>
<rect x="1718.4" y="211.0" width="1.2" height="1.4" fill="#d0b8d8" opacity="0.49"/>
<rect x="1691.8" y="216.7" width="4.5" height="1.9" fill="#d0b8d8" opacity="0.51"/>
<rect x="1697.9" y="216.7" width="2.6" height="1.9" fill="#d8d4c8" opacity="0.60"/>
<rect x="1700.9" y="216.7" width="4.5" height="1.9" fill="#d8d4c8" opacity="0.58"/>
<rect x="1707.0" y="216.7" width="3.2" height="1.9" fill="#d8d4c8" opacity="0.42"/>
<rect x="1710.7" y="216.7" width="3.8" height="1.9" fill="#d8d4c8" opacity="0.48"/>
<rect x="1716.1" y="216.7" width="1.9" height="1.9" fill="#d0b8d8" opacity="0.50"/>
<rect x="1691.8" y="221.6" width="4.6" height="1.2" fill="#c0d4f0" opacity="0.58"/>
<rect x="1697.2" y="221.6" width="3.1" height="1.2" fill="#d8d4c8" opacity="0.49"/>
<rect x="1700.9" y="221.6" width="4.9" height="1.2" fill="#c0d4f0" opacity="0.60"/>
<rect x="1706.6" y="221.6" width="2.0" height="1.2" fill="#d0b8d8" opacity="0.51"/>
<rect x="1709.2" y="221.6" width="2.2" height="1.2" fill="#d8d4c8" opacity="0.44"/>
<rect x="1695.8" y="223.0" width="3.7" height="1.6" fill="#a8b8e0" opacity="0.43"/>
<rect x="1700.1" y="223.0" width="3.0" height="1.6" fill="#b8c4e8" opacity="0.45"/>
<rect x="1704.8" y="223.0" width="3.1" height="1.6" fill="#b8c4e8" opacity="0.50"/>
<rect x="1708.4" y="223.0" width="2.9" height="1.6" fill="#b8c4e8" opacity="0.50"/>
<rect x="1712.0" y="223.0" width="2.3" height="1.6" fill="#d0b8d8" opacity="0.50"/>
<rect x="1714.9" y="223.0" width="2.7" height="1.6" fill="#b8c4e8" opacity="0.43"/>
<rect x="1718.0" y="223.0" width="4.3" height="1.6" fill="#d8d4c8" opacity="0.47"/>
<rect x="1723.1" y="223.0" width="3.2" height="1.6" fill="#b8c4e8" opacity="0.54"/>
<rect x="1727.1" y="223.0" width="0.9" height="1.6" fill="#b8c4e8" opacity="0.49"/>
<rect x="1695.8" y="224.8" width="3.9" height="1.7" fill="#a8b8e0" opacity="0.64"/>
<rect x="1700.1" y="224.8" width="1.9" height="1.7" fill="#b8c4e8" opacity="0.57"/>
<rect x="1702.6" y="224.8" width="3.3" height="1.7" fill="#d0b8d8" opacity="0.52"/>
<rect x="1706.6" y="224.8" width="2.2" height="1.7" fill="#d8d4c8" opacity="0.64"/>
<rect x="1709.6" y="224.8" width="4.3" height="1.7" fill="#b8c4e8" opacity="0.63"/>
<rect x="1715.5" y="224.8" width="2.6" height="1.7" fill="#d8d4c8" opacity="0.55"/>
<rect x="1718.5" y="224.8" width="4.8" height="1.7" fill="#d8d4c8" opacity="0.45"/>
<rect x="1723.7" y="224.8" width="3.3" height="1.7" fill="#a8b8e0" opacity="0.54"/>
<rect x="1691.8" y="228.9" width="2.1" height="1.6" fill="#d8d4c8" opacity="0.58"/>
<rect x="1694.7" y="228.9" width="4.7" height="1.6" fill="#d8d4c8" opacity="0.49"/>
<rect x="1701.0" y="228.9" width="2.3" height="1.6" fill="#d8d4c8" opacity="0.59"/>
<rect x="1704.1" y="228.9" width="2.4" height="1.6" fill="#a8b8e0" opacity="0.44"/>
<rect x="1708.2" y="228.9" width="3.8" height="1.6" fill="#d0b8d8" opacity="0.41"/>
<rect x="1695.8" y="230.8" width="4.4" height="1.7" fill="#b8c4e8" opacity="0.42"/>
<rect x="1701.0" y="230.8" width="2.3" height="1.7" fill="#b8c4e8" opacity="0.61"/>
<rect x="1703.7" y="230.8" width="3.1" height="1.7" fill="#c0d4f0" opacity="0.62"/>
<rect x="1707.6" y="230.8" width="1.5" height="1.7" fill="#b8c4e8" opacity="0.45"/>
<rect x="1709.9" y="230.8" width="3.5" height="1.7" fill="#b8c4e8" opacity="0.43"/>
<rect x="1714.0" y="230.8" width="2.3" height="1.7" fill="#d0b8d8" opacity="0.41"/>
<rect x="1716.9" y="230.8" width="3.5" height="1.7" fill="#d0b8d8" opacity="0.40"/>
<rect x="1721.3" y="230.8" width="4.9" height="1.7" fill="#a8b8e0" opacity="0.46"/>
<rect x="1727.8" y="230.8" width="0.2" height="1.7" fill="#c0d4f0" opacity="0.63"/>
<rect x="1695.8" y="232.7" width="3.1" height="1.7" fill="#b8c4e8" opacity="0.56"/>
<rect x="1699.3" y="232.7" width="3.6" height="1.7" fill="#b8c4e8" opacity="0.61"/>
<rect x="1703.5" y="232.7" width="4.8" height="1.7" fill="#b8c4e8" opacity="0.46"/>
<rect x="1709.9" y="232.7" width="2.9" height="1.7" fill="#a8b8e0" opacity="0.61"/>
<rect x="1713.2" y="232.7" width="3.7" height="1.7" fill="#c0d4f0" opacity="0.59"/>
<rect x="1718.6" y="232.7" width="3.6" height="1.7" fill="#b8c4e8" opacity="0.51"/>
<rect x="1723.0" y="232.7" width="4.4" height="1.7" fill="#d8d4c8" opacity="0.55"/>
<rect x="1695.8" y="236.8" width="1.9" height="1.2" fill="#c0d4f0" opacity="0.40"/>
<rect x="1698.1" y="236.8" width="2.7" height="1.2" fill="#b8c4e8" opacity="0.45"/>
<rect x="1701.6" y="236.8" width="3.0" height="1.2" fill="#a8b8e0" opacity="0.56"/>
<rect x="1705.2" y="236.8" width="2.4" height="1.2" fill="#b8c4e8" opacity="0.61"/>
<rect x="1708.4" y="236.8" width="2.3" height="1.2" fill="#c0d4f0" opacity="0.51"/>
<rect x="1711.3" y="236.8" width="0.7" height="1.2" fill="#d0b8d8" opacity="0.59"/>
<rect x="1691.8" y="238.2" width="4.6" height="2.3" fill="#a8b8e0" opacity="0.65"/>
<rect x="1698.0" y="238.2" width="4.8" height="2.3" fill="#d8d4c8" opacity="0.53"/>
<rect x="1703.5" y="238.2" width="4.8" height="2.3" fill="#d8d4c8" opacity="0.63"/>
<rect x="1709.9" y="238.2" width="4.6" height="2.3" fill="#d8d4c8" opacity="0.65"/>
<rect x="1715.0" y="238.2" width="2.5" height="2.3" fill="#d0b8d8" opacity="0.63"/>
<rect x="1717.9" y="238.2" width="1.6" height="2.3" fill="#a8b8e0" opacity="0.44"/>
<rect x="1719.9" y="238.2" width="3.7" height="2.3" fill="#d0b8d8" opacity="0.41"/>
<rect x="1724.4" y="238.2" width="3.2" height="2.3" fill="#d8d4c8" opacity="0.41"/>
<rect x="1700" y="168.5" width="10" height="6" fill="#8a94aa" opacity="0.5"/>
<rect x="1691.8" y="171.6" width="36.2" height="1" fill="#5a7ab8" opacity="0.6"/>
<rect x="1691.8" y="191.6" width="20" height="1" fill="#5a7ab8" opacity="0.5"/>
<rect x="1691.8" y="201.3" width="36.2" height="1" fill="#5a7ab8" opacity="0.5"/>
</g>
</svg>
</body></html>
